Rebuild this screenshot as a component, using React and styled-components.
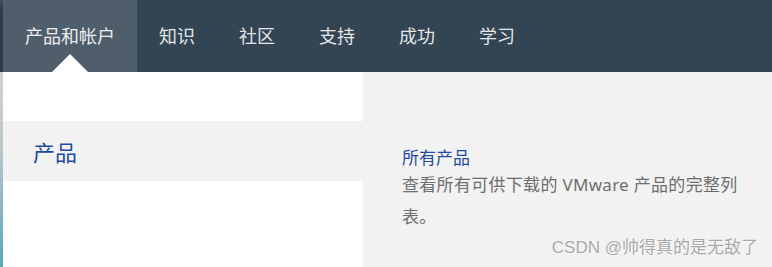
import styled, { createGlobalStyle } from "styled-components";

const GlobalStyle = createGlobalStyle`
  html, body {
    margin: 0;
    padding: 0;
    background: #ffffff;
    overflow: hidden;
  }
  body {
    font-family: "Noto Sans", "Noto Sans CJK SC", sans-serif;
  }
`;

const navItems = ["产品和帐户", "知识", "社区", "支持", "成功", "学习"];

function App() {
  return (
    <>
      <GlobalStyle />
      <SPage>
        <SEdge />
        <SMain>
          <SNavBar>
            {navItems.map((item, index) => (
              <SNavItem key={item} $active={index === 0}>
                {item}
                {index === 0 && <SCaret />}
              </SNavItem>
            ))}
          </SNavBar>
          <SDropdown>
            <SLeftPanel>
              <SCategory>产品</SCategory>
            </SLeftPanel>
            <SRightPanel>
              <SLinkTitle>所有产品</SLinkTitle>
              <SLinkDesc>查看所有可供下载的 VMware 产品的完整列表。</SLinkDesc>
            </SRightPanel>
          </SDropdown>
        </SMain>
        <SWatermark>CSDN @帅得真的是无敌了</SWatermark>
      </SPage>
    </>
  );
}

export default App;

const SPage = styled.div`
  position: relative;
  width: 772px;
  height: 267px;
  display: flex;
  overflow: hidden;
`;

const SEdge = styled.div`
  width: 3px;
  flex-shrink: 0;
  background: linear-gradient(
    to bottom,
    #3a4a57 0px,
    #2c3b47 14px,
    #2c3b47 72px,
    #cfd3d5 72px,
    #b9c6ca 150px,
    #5aa6bd 267px
  );
`;

const SMain = styled.div`
  flex: 1;
  display: flex;
  flex-direction: column;
`;

const SNavBar = styled.nav`
  height: 72px;
  display: flex;
  align-items: stretch;
  background-color: #334452;
`;

const SNavItem = styled.div`
  position: relative;
  display: flex;
  align-items: center;
  padding: 0 22px 2px;
  font-family: "Noto Sans CJK SC", sans-serif;
  font-size: 18px;
  color: ${(props) => (props.$active ? "#eceef0" : "#e2e6e9")};
  background-color: ${(props) => (props.$active ? "#505d6a" : "transparent")};
  cursor: pointer;
`;

const SCaret = styled.span`
  position: absolute;
  left: 50%;
  bottom: 0;
  transform: translateX(-50%);
  width: 0;
  height: 0;
  border-left: 18px solid transparent;
  border-right: 18px solid transparent;
  border-bottom: 18px solid #ffffff;
`;

const SDropdown = styled.div`
  flex: 1;
  display: flex;
`;

const SLeftPanel = styled.div`
  width: 360px;
  flex-shrink: 0;
  background-color: #ffffff;
  padding-top: 49px;
`;

const SCategory = styled.div`
  height: 60px;
  display: flex;
  align-items: center;
  padding-left: 30px;
  background-color: #f2f2f2;
  font-family: "Noto Sans CJK SC", sans-serif;
  font-size: 22px;
  color: #1f4a9e;
`;

const SRightPanel = styled.div`
  flex: 1;
  background-color: #f2f2f2;
  padding: 73px 0 0 39px;
`;

const SLinkTitle = styled.div`
  font-family: "Noto Sans CJK SC", sans-serif;
  font-size: 17px;
  line-height: 24px;
  color: #1f4a9e;
`;

const SLinkDesc = styled.div`
  width: 350px;
  font-size: 17px;
  line-height: 32px;
  letter-spacing: 0.3px;
  color: #6e6e6e;
`;

const SWatermark = styled.div`
  position: absolute;
  right: 14px;
  bottom: 9px;
  font-family: "Liberation Sans", "Noto Sans CJK SC", sans-serif;
  font-size: 17px;
  color: #a9a9a9;
  text-shadow: 0 0 2px #ffffff;
  pointer-events: none;
`;
